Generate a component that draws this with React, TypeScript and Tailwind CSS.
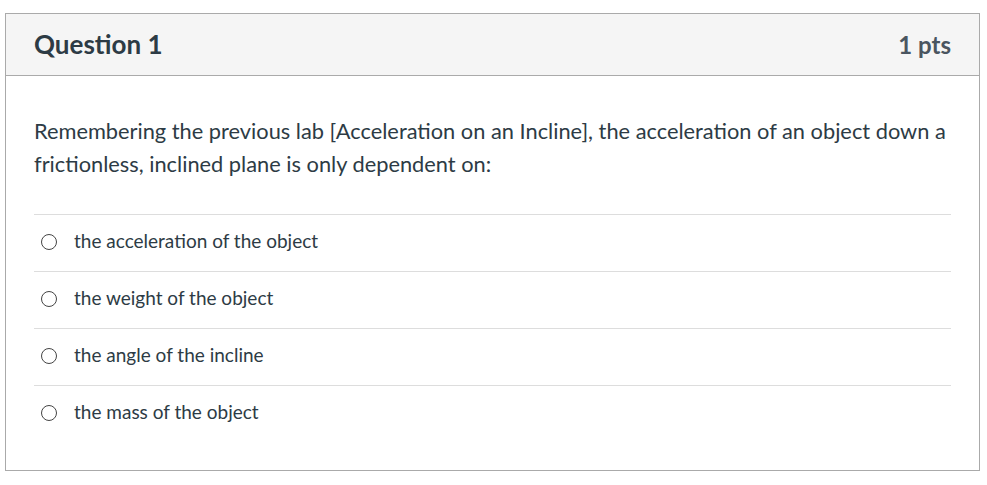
export default function App() {
  const options = [
    "the acceleration of the object",
    "the weight of the object",
    "the angle of the incline",
    "the mass of the object",
  ];
  return (
    <div className="w-[987px] h-[485px] bg-white pt-[13px] pl-[5px]" style={{ fontFamily: "Lato, 'Liberation Sans', sans-serif" }}>
      <div className="w-[975px] border border-[#aaaaaa] text-[#2d3b45]">
        <div className="h-[62px] bg-[#f5f5f5] border-b border-[#aaaaaa] px-[28px] flex items-center justify-between">
          <div className="text-[26px] font-bold">Question 1</div>
          <div className="text-[24px] font-bold text-[#4a5560]">1 pts</div>
        </div>
        <div className="px-[28px] pt-[38px] pb-[28px]">
          <div className="text-[21.8px] leading-[33px]">
            Remembering the previous lab [Acceleration on an Incline], the acceleration of an object down a frictionless, inclined plane is only dependent on:
          </div>
          <div className="mt-[34px]">
            {options.map((o) => (
              <div key={o} className="h-[57px] pb-[3px] border-t border-[#dddddd] flex items-center">
                <div className="w-[16px] h-[16px] rounded-full border border-[#444] ml-[7px] mr-[17px] shrink-0" />
                <span className="text-[19px]">{o}</span>
              </div>
            ))}
          </div>
        </div>
      </div>
    </div>
  );
}
